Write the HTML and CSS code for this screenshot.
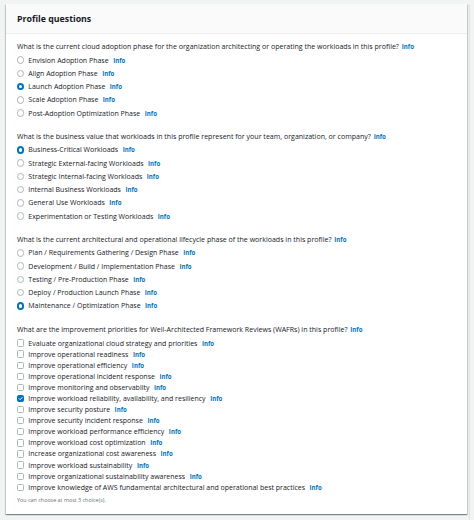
FILE: index.html
```html
<!DOCTYPE html>
<html>
<head>
<meta charset="utf-8">
<link rel="stylesheet" href="styles.css">
</head>
<body>
<div class="page">
  <div class="card">
    <div class="card-header"><h2 class="title">Profile questions</h2></div>
    <div class="card-body">
      <div class="group">
        <div class="question">What is the current cloud adoption phase for the organization architecting or operating the workloads in this profile? <span class="info">Info</span></div>
        <div class="opt"><span class="radio"></span><span class="label">Envision Adoption Phase</span><span class="info">Info</span></div>
        <div class="opt"><span class="radio"></span><span class="label">Align Adoption Phase</span><span class="info">Info</span></div>
        <div class="opt"><span class="radio on"></span><span class="label">Launch Adoption Phase</span><span class="info">Info</span></div>
        <div class="opt"><span class="radio"></span><span class="label">Scale Adoption Phase</span><span class="info">Info</span></div>
        <div class="opt"><span class="radio"></span><span class="label">Post-Adoption Optimization Phase</span><span class="info">Info</span></div>
      </div>
      <div class="group">
        <div class="question">What is the business value that workloads in this profile represent for your team, organization, or company? <span class="info">Info</span></div>
        <div class="opt"><span class="radio on"></span><span class="label">Business-Critical Workloads</span><span class="info">Info</span></div>
        <div class="opt"><span class="radio"></span><span class="label">Strategic External-facing Workloads</span><span class="info">Info</span></div>
        <div class="opt"><span class="radio"></span><span class="label">Strategic Internal-facing Workloads</span><span class="info">Info</span></div>
        <div class="opt"><span class="radio"></span><span class="label">Internal Business Workloads</span><span class="info">Info</span></div>
        <div class="opt"><span class="radio"></span><span class="label">General Use Workloads</span><span class="info">Info</span></div>
        <div class="opt"><span class="radio"></span><span class="label">Experimentation or Testing Workloads</span><span class="info">Info</span></div>
      </div>
      <div class="group">
        <div class="question">What is the current architectural and operational lifecycle phase of the workloads in this profile? <span class="info">Info</span></div>
        <div class="opt"><span class="radio"></span><span class="label">Plan / Requirements Gathering / Design Phase</span><span class="info">Info</span></div>
        <div class="opt"><span class="radio"></span><span class="label">Development / Build / Implementation Phase</span><span class="info">Info</span></div>
        <div class="opt"><span class="radio"></span><span class="label">Testing / Pre-Production Phase</span><span class="info">Info</span></div>
        <div class="opt"><span class="radio"></span><span class="label">Deploy / Production Launch Phase</span><span class="info">Info</span></div>
        <div class="opt"><span class="radio on"></span><span class="label">Maintenance / Optimization Phase</span><span class="info">Info</span></div>
      </div>
      <div class="group checks">
        <div class="question">What are the improvement priorities for Well-Architected Framework Reviews (WAFRs) in this profile? <span class="info">Info</span></div>
        <div class="opt"><span class="check"></span><span class="label">Evaluate organizational cloud strategy and priorities</span><span class="info">Info</span></div>
        <div class="opt"><span class="check"></span><span class="label">Improve operational readiness</span><span class="info">Info</span></div>
        <div class="opt"><span class="check"></span><span class="label">Improve operational efficiency</span><span class="info">Info</span></div>
        <div class="opt"><span class="check"></span><span class="label">Improve operational incident response</span><span class="info">Info</span></div>
        <div class="opt"><span class="check"></span><span class="label">Improve monitoring and observabilty</span><span class="info">Info</span></div>
        <div class="opt"><span class="check on"><svg viewBox="0 0 8 8" width="8" height="8"><path d="M1.6 4.1 L3.3 5.8 L6.4 2.3" fill="none" stroke="#fff" stroke-width="1.3" stroke-linecap="round" stroke-linejoin="round"/></svg></span><span class="label">Improve workload reliability, availability, and resiliency</span><span class="info">Info</span></div>
        <div class="opt"><span class="check"></span><span class="label">Improve security posture</span><span class="info">Info</span></div>
        <div class="opt"><span class="check"></span><span class="label">Improve security incident response</span><span class="info">Info</span></div>
        <div class="opt"><span class="check"></span><span class="label">Improve workload performance efficiency</span><span class="info">Info</span></div>
        <div class="opt"><span class="check"></span><span class="label">Improve workload cost optimization</span><span class="info">Info</span></div>
        <div class="opt"><span class="check"></span><span class="label">Increase organizational cost awareness</span><span class="info">Info</span></div>
        <div class="opt"><span class="check"></span><span class="label">Improve workload sustainability</span><span class="info">Info</span></div>
        <div class="opt"><span class="check"></span><span class="label">Improve organizational sustainability awareness</span><span class="info">Info</span></div>
        <div class="opt"><span class="check"></span><span class="label">Improve knowledge of AWS fundamental architectural and operational best practices</span><span class="info">Info</span></div>
        <div class="hint">You can choose at most 3 choice(s).</div>
      </div>
    </div>
  </div>
  <div class="rail"></div>
</div>
</body>
</html>
```

FILE: styles.css
```css
html, body {
  margin: 0;
  padding: 0;
}
body {
  background: #f2f3f3;
  font-family: "Open Sans", "Liberation Sans", sans-serif;
  color: #16191f;
  width: 474px;
  height: 520px;
  overflow: hidden;
}
.page {
  display: flex;
  align-items: flex-start;
  padding: 4px 0 0 6px;
  height: 520px;
  box-sizing: border-box;
}
.rail {
  margin-left: 2px;
  width: 1px;
  height: 516px;
  background: #e3e4e4;
  flex: none;
}
.card {
  width: 461px;
  height: 510px;
  flex: none;
  background: #fff;
  box-shadow: 0 1px 1px rgba(0,28,36,0.3), 1px 1px 1px rgba(0,28,36,0.15), -1px 1px 1px rgba(0,28,36,0.15);
  box-sizing: border-box;
}
.card-header {
  height: 29px;
  background: #fafafa;
  border-bottom: 1px solid #eaeded;
  display: flex;
  align-items: center;
  padding-left: 11px;
}
.title {
  margin: 0;
  font-size: 8.8px;
  font-weight: 700;
  line-height: 12px;
}
.card-body {
  padding: 6px 11px 0 11px;
}
.group {
  margin-bottom: 10px;
}
.question {
  font-size: 7.05px;
  line-height: 13.5px;
  white-space: nowrap;
}
.opt {
  display: flex;
  align-items: center;
  height: 13.25px;
  font-size: 7px;
  white-space: nowrap;
}
.checks .opt {
  height: 11.1px;
}
.checks .question {
  margin-bottom: 1.5px;
}
.radio {
  width: 7.3px;
  height: 7.3px;
  box-sizing: border-box;
  border: 1px solid #aab7b8;
  border-radius: 50%;
  margin-right: 4px;
  flex: none;
}
.radio.on {
  border: 2.2px solid #0073bb;
}
.check {
  width: 7.3px;
  height: 7.3px;
  box-sizing: border-box;
  border: 1px solid #aab7b8;
  border-radius: 1.5px;
  margin-right: 4px;
  flex: none;
  display: flex;
  align-items: center;
  justify-content: center;
}
.check.on {
  background: #0073bb;
  border-color: #0073bb;
}
.check svg {
  width: 7px;
  height: 7px;
}
.label {
  margin-right: 3.5px;
}
.info {
  color: #0073bb;
  font-weight: 700;
  font-size: 6.1px;
  margin-left: 1px;
}
.hint {
  font-size: 5.4px;
  color: #687078;
  line-height: 10px;
  margin-top: 2px;
}
```
